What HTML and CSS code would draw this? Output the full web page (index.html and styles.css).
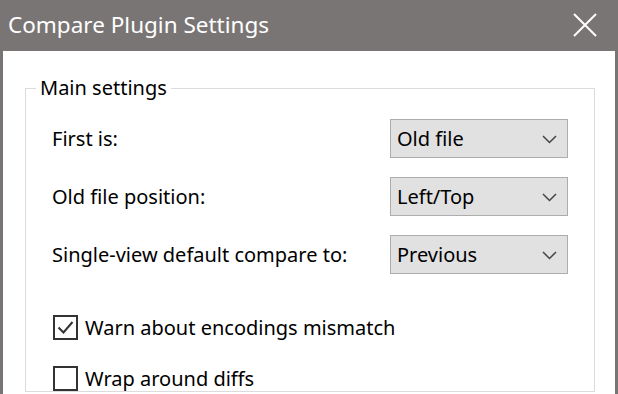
FILE: index.html
```html
<!DOCTYPE html>
<html>
<head>
<meta charset="utf-8">
<link rel="stylesheet" href="styles.css">
</head>
<body>
<div class="window">
  <div class="titlebar">
    <span class="title">Compare Plugin Settings</span>
    <svg class="close" width="26" height="26" viewBox="0 0 26 26"><path d="M2 2 L24 24 M24 2 L2 24" stroke="#fff" stroke-width="2" fill="none"/></svg>
  </div>
  <div class="content">
    <fieldset class="group">
      <legend class="legend">Main settings</legend>
      <div class="rows">
        <div class="row">
          <span class="label">First is:</span>
          <div class="combo"><span>Old file</span><svg class="chev" width="15" height="9" viewBox="0 0 15 9"><path d="M1 1 L7.5 7.5 L14 1" stroke="#444" stroke-width="1.5" fill="none"/></svg></div>
        </div>
        <div class="row">
          <span class="label">Old file position:</span>
          <div class="combo"><span>Left/Top</span><svg class="chev" width="15" height="9" viewBox="0 0 15 9"><path d="M1 1 L7.5 7.5 L14 1" stroke="#444" stroke-width="1.5" fill="none"/></svg></div>
        </div>
        <div class="row">
          <span class="label">Single-view default compare to:</span>
          <div class="combo"><span>Previous</span><svg class="chev" width="15" height="9" viewBox="0 0 15 9"><path d="M1 1 L7.5 7.5 L14 1" stroke="#444" stroke-width="1.5" fill="none"/></svg></div>
        </div>
      </div>
      <div class="checks">
        <div class="check">
          <span class="box"><svg width="21" height="21" viewBox="0 0 21 21"><path d="M3.5 10.5 L8.5 15.5 L17.5 5" stroke="#333" stroke-width="2" fill="none"/></svg></span>
          <span class="ctext">Warn about encodings mismatch</span>
        </div>
        <div class="check">
          <span class="box"></span>
          <span class="ctext">Wrap around diffs</span>
        </div>
      </div>
    </fieldset>
  </div>
</div>
</body>
</html>
```
FILE: styles.css
```css
html, body {
  margin: 0;
  padding: 0;
  background: #fff;
}
body {
  width: 618px;
  height: 394px;
  overflow: hidden;
  font-family: "Noto Sans", "Open Sans", sans-serif;
  color: #000;
}
.window {
  height: 394px;
  border-left: 3px solid #7a7575;
  border-right: 3px solid #7a7575;
  box-sizing: border-box;
  background: #fff;
}
.titlebar {
  height: 51px;
  margin: 0 -3px;
  background: #7a7575;
  display: flex;
  align-items: center;
  justify-content: space-between;
  padding: 0 20px 0 8px;
}
.title {
  color: #fff;
  font-size: 22.5px;
  line-height: 28px;
  padding-bottom: 1px;
}
.close {
  display: block;
  margin-top: -1px;
}
.content {
  padding: 25px 20px 0 22px;
}
.group {
  margin: 0;
  border: 1px solid #dcdcdc;
  padding: 0 26px 0 26px;
  min-width: 0;
}
.legend {
  font-size: 20px;
  line-height: 24px;
  padding: 0 4px 0 4px;
  margin-left: -16px;
}
.rows {
  display: flex;
  flex-direction: column;
  gap: 19px;
  padding-top: 19px;
}
.row {
  display: flex;
  align-items: center;
  justify-content: space-between;
}
.label {
  font-size: 20px;
  line-height: 24px;
}
.combo {
  width: 178px;
  height: 39px;
  box-sizing: border-box;
  border: 1px solid #adadad;
  background: #e1e1e1;
  display: flex;
  align-items: center;
  justify-content: space-between;
  padding: 0 10px 0 6px;
  font-size: 20px;
}
.chev {
  display: block;
  margin-top: 1px;
}
.checks {
  display: flex;
  flex-direction: column;
  gap: 26px;
  padding-top: 41px;
  padding-left: 1px;
}
.check {
  display: flex;
  align-items: center;
  gap: 7px;
}
.box {
  width: 25px;
  height: 25px;
  box-sizing: border-box;
  border: 2px solid #333;
  background: #fff;
  display: flex;
  align-items: center;
  justify-content: center;
}
.box svg {
  display: block;
}
.ctext {
  font-size: 20px;
  line-height: 24px;
}
```
